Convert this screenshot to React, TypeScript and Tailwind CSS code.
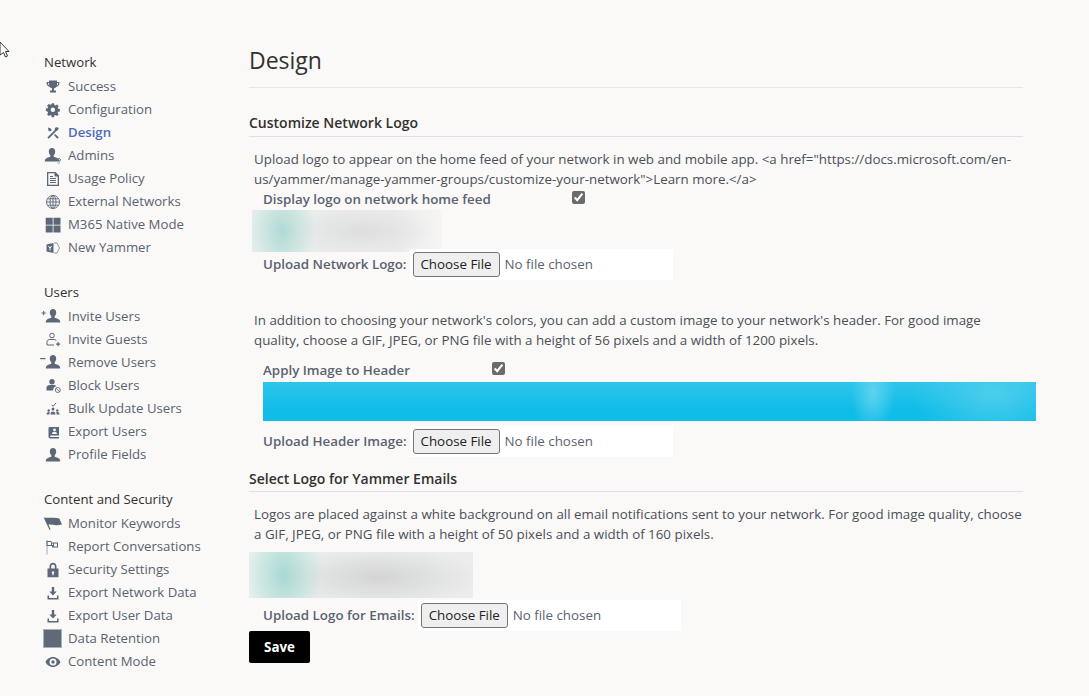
import type { ReactNode } from "react";

const FONT = "font-['Open_Sans','Noto_Sans',sans-serif]";

const Ico = ({ children, vb = "0 0 16 16" }: { children: ReactNode; vb?: string }) => (
    <svg viewBox={vb} className="w-4 h-4 shrink-0 overflow-visible" fill="#5c6878">
        {children}
    </svg>
);

// head and shoulders, used by most of the user icons
const person = "M8 1c2 0 3.200 1.500 3.200 3.500 0 1.600-.7 3-1.500 3.700v1.500c2 .6 4.300 1.300 5 2.500.4.600.5 1.500.5 2.300H.800c0-.8.1-1.700.5-2.300.7-1.200 3-1.900 5-2.500V8.200C5.500 7.500 4.800 6.100 4.800 4.500 4.800 2.500 6 1 8 1z";

const icons: Record<string, ReactNode> = {
    Success: <Ico><path d="M4 1.500h8v1.500h2.500c0 2.800-1 4.300-3 4.800-.5.800-1.300 1.300-2.500 1.500v2.200h2v2H5v-2h2V9.300C5.800 9.100 5 8.600 4.500 7.800c-2-.5-3-2-3-4.800H4zm0 2.500H3c.1 1.300.5 2 1.200 2.500zm8 0v2.500c.7-.5 1.100-1.200 1.200-2.500z" /></Ico>,
    Configuration: <Ico><path fillRule="evenodd" d="M6.800 1.500h2.400l.4 1.800 1.100.5 1.600-1 1.700 1.700-1 1.600.5 1.100 1.800.4v2.400l-1.800.4-.5 1.100 1 1.600-1.700 1.700-1.600-1-1.100.5-.4 1.800H6.800l-.4-1.800-1.100-.5-1.600 1-1.700-1.700 1-1.600-.5-1.100L.7 9.400V7l1.800-.4.5-1.100-1-1.600 1.700-1.700 1.600 1 1.100-.5zM8 5.900a2.300 2.300 0 100 4.600 2.300 2.300 0 000-4.600z" transform="translate(.2 -.2) scale(.96)" /></Ico>,
    Design: <Ico><path d="M3 2.500l2.800.9.900 1.700-1.500 1.500-1.700-.9zM12.500 2.300l1.300 1.300L3.700 13.700l-1.300-1.300zM10 9l3.800 3.200-1.500 1.600L9 10z" /><circle cx="11.500" cy="4" r="1.800" /></Ico>,
    Admins: <Ico vb="0 0 16 16"><g transform="translate(-1 -1)"><path d={person} /></g><path d="M12.500 11c.8-1 3-.6 2.900 1-.1 1-1 1.200-1.600 1.600" fill="none" stroke="#5c6878" strokeWidth="1" /><circle cx="13.800" cy="15" r="1.300" fill="#b9d0d6" /></Ico>,
    "Usage Policy": <Ico><path fillRule="evenodd" d="M2 1h8.500L14 4.500V15H2zm1.300 1.300v11.400h9.400V5.500H9.500V2.300zM5 7h6v1H5zm0 2h6v1H5zm0 2h6v1H5zM5 5h3v1H5z" /></Ico>,
    "External Networks": <Ico><g fill="none" stroke="#5c6878" strokeWidth=".9"><circle cx="8" cy="8" r="6.500" /><ellipse cx="8" cy="8" rx="3" ry="6.500" /><path d="M1.500 8h13M2.500 4.800h11M2.500 11.200h11M8 1.500v13" /></g></Ico>,
    "M365 Native Mode": <Ico vb="0 0 16 16"><path d="M.7.700h7v7h-7zM8.500.700h7v7h-7zM.7 8.500h7v7h-7zM8.500 8.500h7v7h-7z" /></Ico>,
    "New Yammer": <Ico><path d="M1.500 4.500L8.500 3v10l-7-1.500z" /><path d="M9 3h3l2.500 5L12 13H9" fill="none" stroke="#8d97a3" strokeWidth="1" /><path d="M3.500 6l1.500 2.300L6.500 6M5 8.300V10.500" fill="none" stroke="#faf9f8" strokeWidth="1" /></Ico>,
    "Invite Users": <Ico><g transform="translate(0 -1)"><path d={person} /></g><path d="M-3.500 3.500h1.600V2h1.100v1.500H.8v1.100H-.8v1.600h-1.100V4.600h-1.600z" /></Ico>,
    "Invite Guests": <Ico><g fill="none" stroke="#5c6878" strokeWidth="1"><circle cx="7" cy="3.500" r="2.300" /><path d="M2 13V9.500c0-1 1.500-2 3-2h4c1 0 2 .5 2.500 1.500M2 13h7" /></g><path d="M11 10h1.500V8.500h1.200V10h1.500v1.200h-1.500v1.500h-1.200v-1.500H11z" transform="translate(0 1.500)" /></Ico>,
    "Remove Users": <Ico><g transform="translate(0 -1)"><path d={person} /></g><path d="M-4.800 3h5.300v1.200h-5.300z" /></Ico>,
    "Block Users": <Ico><circle cx="7" cy="3.700" r="2.700" /><path d="M1.500 12.500V9.500c0-1.300 1.500-2.500 3-2.500h4.500c1 0 1.700.5 2.200 1.200-1.800.2-3.200 2-3.200 4.300z" /><g fill="none" stroke="#5c6878" strokeWidth=".9"><circle cx="12.800" cy="12" r="2.500" /><path d="M11 10.200l3.600 3.600" /></g></Ico>,
    "Bulk Update Users": <Ico><circle cx="8" cy="8" r="1.500" /><path d="M5.500 13.500c0-2 1-3 2.500-3s2.500 1 2.500 3z" /><circle cx="3.700" cy="9.500" r="1.200" /><path d="M1.500 13.500c0-1.500.8-2.500 2.200-2.500.5 0 .9.100 1.200.3-.4.600-.5 1.300-.5 2.200z" /><circle cx="12.300" cy="9.500" r="1.200" /><path d="M14.500 13.500c0-1.500-.8-2.500-2.200-2.500-.5 0-.9.100-1.200.3.400.6.500 1.300.5 2.200z" /><path d="M6.800 3.800l1.400 1.500L11 1.800" fill="none" stroke="#5c6878" strokeWidth="1" /></Ico>,
    "Export Users": <Ico><path fillRule="evenodd" d="M5 3h9v8.500H6c-.6 0-1 .3-1 .7s.4.800 1 .8h8v1.500H5.500C4 14.500 3.500 13.500 3.500 12.500V4.500C3.500 3.700 4 3 5 3zm4.500 1.500a1.400 1.400 0 100 2.800 1.400 1.400 0 000-2.800zM7 10h5c0-1.300-1.100-2.200-2.500-2.200S7 8.700 7 10z" /></Ico>,
    "Profile Fields": <Ico><path d={person} /></Ico>,
    "Monitor Keywords": <Ico><path d="M-1.200 1.800h10c1.800 0 3.800.3 5.500 .6l2.700 6c-2.200.4-4 .9-6 .9-2 0-4-.7-6-.7H3.500l2 5-1 .4z" /></Ico>,
    "Report Conversations": <Ico><path d="M1.500 1h1v14.500h-1z" fill="#8fb0c4" /><path fillRule="evenodd" d="M2 2h5v1.500h6.500v5H7.500V7H2zm1 1v3h3.500V3zm4.500 1.500V6h1V4.500zm2 0v3h3v-3z" transform="translate(-.5 0)" /></Ico>,
    "Security Settings": <Ico><path fillRule="evenodd" d="M4.500 6.500V4.500C4.500 2.300 6 .8 8 .8s3.500 1.500 3.500 3.700v2h2v8.700h-11V6.500zM6.200 6.500h3.600V4.500c0-1.100-.7-2-1.800-2s-1.800.9-1.800 2zM8 9.300a1.300 1.300 0 00-.6 2.400v1.500h1.200v-1.500A1.300 1.300 0 008 9.300z" /></Ico>,
    "Export Network Data": <Ico><path d="M6.800 2h2.400v4.500h2.500L8 10.500 4.300 6.500h2.500zM2.500 10.500H4v2.500h8v-2.500h1.500V14.500h-11z" /></Ico>,
    "Export User Data": <Ico><path d="M6.800 2h2.400v4.500h2.500L8 10.500 4.300 6.500h2.500zM2.500 10.500H4v2.500h8v-2.500h1.500V14.500h-11z" /></Ico>,
    "Data Retention": <div className="w-[19px] h-[19px] -ml-[2px] -my-[2px] shrink-0 bg-[#5f6a78] border border-[#a9b0b8]" />,
    "Content Mode": <Ico><path fillRule="evenodd" d="M8 3c3.500 0 6.200 2.400 7.500 5-1.300 2.600-4 5-7.500 5S1.800 10.600.5 8C1.800 5.400 4.500 3 8 3zm0 1.500a3.500 3.500 0 100 7 3.500 3.500 0 000-7zM8 6.300a1.700 1.700 0 110 3.400 1.700 1.700 0 010-3.400z" /></Ico>,
};

const navGroups = [
    { title: "Network", items: ["Success", "Configuration", "Design", "Admins", "Usage Policy", "External Networks", "M365 Native Mode", "New Yammer"] },
    { title: "Users", items: ["Invite Users", "Invite Guests", "Remove Users", "Block Users", "Bulk Update Users", "Export Users", "Profile Fields"] },
    { title: "Content and Security", items: ["Monitor Keywords", "Report Conversations", "Security Settings", "Export Network Data", "Export User Data", "Data Retention", "Content Mode"] },
];

const SectionTitle = ({ children, className = "" }: { children: ReactNode; className?: string }) => (
    <h2 className={`text-[14px] leading-[20px] font-semibold text-[#323130] border-b border-[#e1dfe8] ${className}`}>{children}</h2>
);

const UploadRow = ({ label, className = "" }: { label: string; className?: string }) => (
    <div className={`flex items-center h-[31px] pl-[14px] ${className}`}>
        <label className="text-[13.350px] font-semibold text-[#5a6270] mr-[3px] whitespace-nowrap">{label}</label>
        <div className="flex items-center w-[263px] h-[31px] bg-white pl-[3px]">
            <input
                type="file"
                className="text-[13.350px] text-[#5a6270] file:h-[25px] file:w-[87px] file:border file:border-[#767676] file:rounded-[3px] file:bg-[#efefef] file:text-[#222] file:mr-[5px]"
            />
        </div>
    </div>
);

export default function App() {
    return (
        <div className={`relative flex min-h-[696px] bg-[#faf9f8] ${FONT} overflow-hidden`}>
            <svg viewBox="0 0 11 20" className="absolute left-0 top-[42px] w-[11px] h-[20px]" fill="white" stroke="#333" strokeWidth="1">
                <path d="M0 0l9 9.500H5.500l2 4.500-2 1-2-4.500L0 13z" />
            </svg>

            <aside className="w-[249px] shrink-0 pl-[44px] pt-[52px]">
                {navGroups.map((group) => (
                    <div key={group.title} className="mb-[23px]">
                        <div className="text-[13.200px] leading-[20px] text-[#323130] mb-[3px]">{group.title}</div>
                        <ul>
                            {group.items.map((item) => (
                                <li key={item} className="flex items-center h-[23px] pl-[1px]">
                                    <span className="w-[23px] shrink-0 flex items-center">{icons[item]}</span>
                                    <span className={`text-[13.200px] whitespace-nowrap ${item === "Design" ? "font-semibold text-[#4f6bbd]" : "text-[#5a6270]"}`}>{item}</span>
                                </li>
                            ))}
                        </ul>
                    </div>
                ))}
            </aside>

            <main className="w-[774px] pt-[44px] text-[13.350px] text-[#4a4f57]">
                <h1 className="text-[23px] leading-[32px] text-[#323130] border-b border-[#e8e6e4] pb-[11px]">Design</h1>

                <SectionTitle className="mt-[25px] pb-[3px]">Customize Network Logo</SectionTitle>
                <p className="mt-[12px] pl-[5px] leading-[20px]">
                    Upload logo to appear on the home feed of your network in web and mobile app. &lt;a href="https://docs.microsoft.com/en-us/yammer/manage-yammer-groups/customize-your-network"&gt;Learn more.&lt;/a&gt;
                </p>
                <div className="flex items-center h-[20px] pl-[14px]">
                    <label className="w-[309px] font-semibold text-[#5a6270]">Display logo on network home feed</label>
                    <input type="checkbox" defaultChecked className="w-[13px] h-[13px] -mt-[3px] accent-[#6b6b6b]" />
                </div>
                <div className="w-[190px] h-[42px] mt-[1px] ml-[3px] bg-[radial-gradient(ellipse_34px_50px_at_30px_50%,#b0dad5,transparent),radial-gradient(ellipse_75px_26px_at_110px_50%,#dedede,transparent),linear-gradient(90deg,#e8f0ee,#ececec_75%,#f6f5f4)]" />
                <UploadRow label="Upload Network Logo:" className="-mt-[3px]" />

                <p className="mt-[30px] pl-[5px] leading-[20px]">
                    In addition to choosing your network's colors, you can add a custom image to your network's header. For good image quality, choose a GIF, JPEG, or PNG file with a height of 56 pixels and a width of 1200 pixels.
                </p>
                <div className="flex items-center h-[20px] mt-[10px] pl-[14px]">
                    <label className="w-[229px] font-semibold text-[#5a6270]">Apply Image to Header</label>
                    <input type="checkbox" defaultChecked className="w-[13px] h-[13px] -mt-[3px] accent-[#6b6b6b]" />
                </div>
                <div className="w-[773px] h-[39px] mt-[2px] ml-[14px] bg-[radial-gradient(ellipse_22px_40px_at_610px_25%,#5dd3ee,transparent),radial-gradient(ellipse_80px_50px_at_730px_30%,#4bcdec,transparent),linear-gradient(180deg,#2fc5e9,#10bde8_70%)]" />
                <UploadRow label="Upload Header Image:" className="mt-[5px]" />

                <SectionTitle className="mt-[12px] pb-[2px]">Select Logo for Yammer Emails</SectionTitle>
                <p className="mt-[12px] pl-[5px] leading-[20px]">
                    Logos are placed against a white background on all email notifications sent to your network. For good image quality, choose a GIF, JPEG, or PNG file with a height of 50 pixels and a width of 160 pixels.
                </p>
                <div className="w-[224px] h-[46px] mt-[8px] bg-[radial-gradient(ellipse_38px_56px_at_35px_50%,#a8d9d3,transparent),radial-gradient(ellipse_100px_30px_at_130px_55%,#d4d4d4,transparent),linear-gradient(90deg,#e8f0ee,#ececec)]" />
                <UploadRow label="Upload Logo for Emails:" className="mt-[2px]" />
                <button className="w-[61px] h-[32px] bg-black text-white text-[13.350px] font-bold rounded-[2px]">Save</button>
            </main>
        </div>
    );
}
